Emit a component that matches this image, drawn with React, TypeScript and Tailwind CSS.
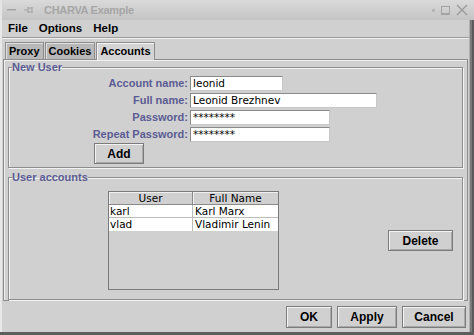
import React from 'react'

const btn =
  'flex items-center justify-center bg-[#d0d0d0] border border-[#7c7c7c] shadow-[inset_1px_1px_0_#f4f4f4,inset_-1px_-1px_0_#a8a8a8] font-bold text-[12px] text-black'

const field =
  'h-[15px] bg-white border border-[#8a8a8a] border-b-[#c8c8c8] border-r-[#c8c8c8] pl-[2px] flex items-center text-[10.5px] text-black font-["DejaVu_Sans",sans-serif] leading-none'

const tab =
  'px-[3px] flex items-center border border-[#8c8c8c] border-b-0 text-[11px] font-bold'

function Row({ label, value, w }: { label: string; value: string; w: string }) {
  return (
    <div className="flex items-center h-[17px]">
      <div className="w-[179px] text-right text-[11px] font-bold text-[#5c5c94] leading-none">{label}</div>
      <div className={`ml-[2px] ${w} ${field}`}>{value}</div>
    </div>
  )
}

export default function App(): JSX.Element {
  return (
    <div className='w-[474px] h-[335px] overflow-hidden flex flex-col bg-[#d0d0d0] font-["Liberation_Sans",Arial,sans-serif] select-none'>
      {/* title bar */}
      <div className="h-[20px] flex items-center bg-gradient-to-b from-[#dadada] to-[#c4c4c4] border-l-2 border-[#e4e4e4]">
        <svg width="12" height="6" className="ml-[4px]" viewBox="0 0 12 6">
          <rect x="1" y="2" width="9" height="1.5" fill="#a4a4a4" />
        </svg>
        <svg width="12" height="10" className="ml-[5px]" viewBox="0 0 12 10">
          <path d="M1 5h4M5 2v6M5 3h4v4H5M9 2v6" stroke="#a4a4a4" strokeWidth="1.2" fill="none" />
        </svg>
        <span className="ml-[9px] text-[11px] text-[#a6a6a6] font-bold tracking-[-0.3px]">CHARVA Example</span>
        <div className="ml-auto flex items-center gap-[6px] mr-[6px]">
          <div className="w-[3px] h-[3px] bg-[#b4b4b4]" />
          <div className="w-[9px] h-[9px] border border-[#a4a4a4] border-b-2" />
          <svg width="12" height="12" viewBox="0 0 12 12">
            <path d="M1 1l10 10M11 1L1 11" stroke="#9a9a9a" strokeWidth="1.3" />
          </svg>
        </div>
      </div>

      <div className="flex-1 flex">
        <div className="flex-1 flex flex-col border-l-2 border-[#e8e8e8]">
          {/* menu bar */}
          <div className="h-[18px] flex items-center gap-[11px] pl-[6px] text-[11.5px] font-bold text-black border-b border-[#9c9c9c] shadow-[0_1px_0_#eeeeee]">
            <span>File</span>
            <span>Options</span>
            <span>Help</span>
          </div>

          {/* tabs */}
          <div className="flex items-end h-[20px] pl-[3px] mt-[1px]">
            <div className={`h-[17px] bg-[#b8b8b8] shadow-[inset_1px_1px_0_#e0e0e0] ${tab}`}>Proxy</div>
            <div className={`h-[17px] ml-[1px] bg-[#b8b8b8] shadow-[inset_1px_1px_0_#e0e0e0] ${tab}`}>Cookies</div>
            <div className={`h-[18px] ml-[1px] bg-[#d4d4d4] shadow-[inset_1px_1px_0_#f4f4f4] relative z-10 -mb-px ${tab}`}>Accounts</div>
          </div>

          {/* tab panel */}
          <div className="h-[242px] mx-[1px] border border-[#8c8c8c] shadow-[inset_1px_1px_0_#f0f0f0] px-[4px] pt-[1px] flex flex-col">
            <fieldset className="border border-[#8e8e8e] shadow-[1px_1px_0_#f2f2f2,inset_1px_1px_0_#f2f2f2] pb-[3px]">
              <legend className="ml-[3px] text-[11px] font-bold text-[#5c5c94] leading-[12px]">New User</legend>
              <div className="mt-[2px]">
                <Row label="Account name:" value="leonid" w="w-[93px]" />
                <Row label="Full name:" value="Leonid Brezhnev" w="w-[187px]" />
                <Row label="Password:" value="********" w="w-[140px]" />
                <Row label="Repeat Password:" value="********" w="w-[140px]" />
              </div>
              <div className={`ml-[85px] w-[50px] h-[21px] ${btn}`}>Add</div>
            </fieldset>

            <fieldset className="mt-[3px] flex-1 border border-[#8e8e8e] shadow-[1px_1px_0_#f2f2f2,inset_1px_1px_0_#f2f2f2] pb-[8px]">
              <legend className="ml-[3px] text-[11px] font-bold text-[#5c5c94] leading-[12px]">User accounts</legend>
              <div className="flex items-start mt-[8px]">
                <div className='ml-[99px] w-[171px] h-[99px] border border-[#7a7a7a] bg-[#d0d0d0] text-[10.5px] font-["DejaVu_Sans",sans-serif] leading-none'>
                  <div className="grid grid-cols-[84px_1fr] h-[13px] border-b border-[#8a8a8a]">
                    <div className="flex items-center justify-center border-r border-[#8a8a8a] shadow-[inset_1px_1px_0_#f0f0f0]">User</div>
                    <div className="flex items-center justify-center shadow-[inset_1px_1px_0_#f0f0f0]">Full Name</div>
                  </div>
                  <div className="grid grid-cols-[84px_1fr] h-[13px] bg-white border-b border-[#bcbcbc]">
                    <div className="flex items-center pl-px border-r border-[#bcbcbc]">karl</div>
                    <div className="flex items-center pl-[2px]">Karl Marx</div>
                  </div>
                  <div className="grid grid-cols-[84px_1fr] h-[13px] bg-white">
                    <div className="flex items-center pl-px border-r border-[#bcbcbc]">vlad</div>
                    <div className="flex items-center pl-[2px]">Vladimir Lenin</div>
                  </div>
                </div>
                <div className={`ml-[109px] mt-[39px] w-[65px] h-[21px] ${btn}`}>Delete</div>
              </div>
            </fieldset>
          </div>

          {/* bottom buttons */}
          <div className="flex-1 flex items-start justify-end gap-[5px] pt-[5px] pr-[3px]">
            <div className={`w-[46px] h-[22px] ${btn}`}>OK</div>
            <div className={`w-[60px] h-[22px] ${btn}`}>Apply</div>
            <div className={`w-[64px] h-[22px] ${btn}`}>Cancel</div>
          </div>
        </div>
        <div className="w-[5px] bg-[#7a7a7a] border-l border-[#b0b0b0] border-r-2 border-r-[#5a5a5a]" />
      </div>
      <div className="h-[3px] bg-[#5e5e5e]" />
    </div>
  )
}
